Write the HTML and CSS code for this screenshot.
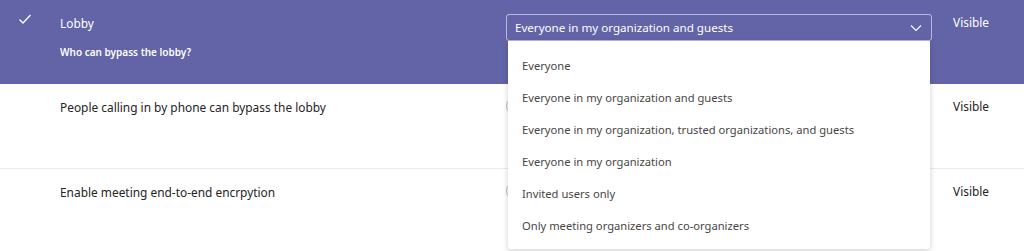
FILE: index.html
```html
<!DOCTYPE html>
<html lang="en">
<head>
<meta charset="UTF-8" />
<meta name="viewport" content="width=device-width, initial-scale=1.0" />
<title>Meeting settings</title>
<link rel="stylesheet" href="styles.css">
</head>
<body>
  <div class="settings">
    <div class="row active">
      <div class="check">
        <svg width="14" height="12" viewBox="0 0 14 12"><path d="M1.5 6.5 L5 10 L12.5 2" fill="none" stroke="#fff" stroke-width="1.3"/></svg>
      </div>
      <div class="label">
        <div class="title">Lobby</div>
        <div class="sub">Who can bypass the lobby?</div>
      </div>
      <div class="control">
        <div class="select">
          <span>Everyone in my organization and guests</span>
          <svg width="12" height="8" viewBox="0 0 12 8"><path d="M1 1.5 L6 6.5 L11 1.5" fill="none" stroke="#fff" stroke-width="1.1"/></svg>
        </div>
        <ul class="menu">
          <li>Everyone</li>
          <li>Everyone in my organization and guests</li>
          <li>Everyone in my organization, trusted organizations, and guests</li>
          <li>Everyone in my organization</li>
          <li>Invited users only</li>
          <li>Only meeting organizers and co-organizers</li>
        </ul>
      </div>
      <div class="state">Visible</div>
    </div>

    <div class="row">
      <div class="check"></div>
      <div class="label">
        <div class="title">People calling in by phone can bypass the lobby</div>
      </div>
      <div class="control"><div class="toggle"></div></div>
      <div class="state">Visible</div>
    </div>

    <div class="row last">
      <div class="check"></div>
      <div class="label">
        <div class="title">Enable meeting end-to-end encrpytion</div>
      </div>
      <div class="control"><div class="toggle"></div></div>
      <div class="state">Visible</div>
    </div>
  </div>
</body>
</html>
```

FILE: styles.css
```css
* { box-sizing: border-box; }
body {
  margin: 0;
  font-family: "Noto Sans", "Open Sans", Arial, sans-serif;
  font-size: 11.9px;
  color: #252423;
  background: #fff;
}
.settings { width: 1024px; }
.row {
  display: grid;
  grid-template-columns: 60px 446px 426px 1fr;
  border-bottom: 1px solid #edebe9;
  height: 85px;
}
.row.active {
  background: #6264a7;
  color: #fff;
  height: 84px;
  border-bottom: none;
}
.row.last { border-bottom: none; height: 82px; }
.check { padding: 12px 0 0 18px; }
.label { padding-top: 14px; }
.title { line-height: 18px; }
.sub {
  font-size: 10px;
  font-weight: 600;
  margin-top: 13px;
}
.control { position: relative; padding-top: 14px; }
.select {
  height: 27px;
  border: 1px solid rgba(255,255,255,0.55);
  border-radius: 3px;
  display: flex;
  align-items: center;
  justify-content: space-between;
  padding: 0 9px 0 8px;
  font-size: 11.6px;
}
.toggle {
  width: 40px;
  height: 20px;
  border: 1px solid #bdbdbd;
  border-radius: 10px;
  margin-top: -2px;
}
.menu {
  position: absolute;
  top: 41px;
  left: 2px;
  width: 422px;
  margin: 0;
  padding: 9px 0 7px;
  list-style: none;
  background: #fff;
  color: #484644;
  border-radius: 0 0 3px 3px;
  box-shadow: 0 2px 6px rgba(0,0,0,0.18);
  z-index: 2;
  font-size: 11.2px;
}
.menu li {
  height: 32px;
  line-height: 32px;
  padding-left: 14px;
}
.state { padding: 13px 0 0 21px; line-height: 18px; }
```
